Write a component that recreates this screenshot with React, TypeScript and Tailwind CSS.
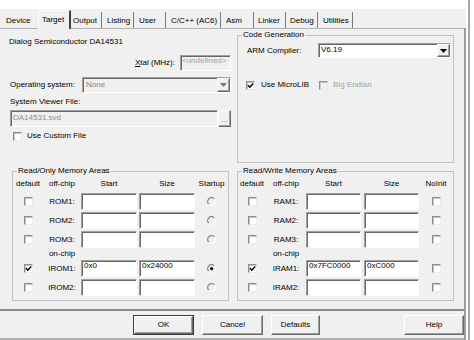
import React from 'react';

const sunken =
  'border border-t-[#a0a0a0] border-l-[#a0a0a0] border-r-white border-b-white shadow-[inset_1px_1px_0_#696969]';
const raised =
  'border border-t-white border-l-white border-r-[#696969] border-b-[#696969] shadow-[inset_-1px_-1px_0_#a0a0a0]';

function Check({ checked = false, disabled = false, cls = '' }: { checked?: boolean; disabled?: boolean; cls?: string }) {
  return (
    <div
      className={`${cls} relative w-[9px] h-[9px] shrink-0 border border-t-[#8e8e8e] border-l-[#8e8e8e] border-r-[#e8e8e8] border-b-[#e8e8e8] shadow-[inset_1px_1px_0_#c4c4c4] ${
        disabled ? 'bg-[#f0f0f0]' : 'bg-white'
      }`}
    >
      {checked && (
        <svg className="absolute left-0 top-0" width="7" height="7" viewBox="0 0 7 7">
          <path d="M1 3.2 L2.8 5.2 L6.2 1.4" stroke="#000" strokeWidth="1.5" fill="none" />
        </svg>
      )}
    </div>
  );
}

function Radio({ checked = false }: { checked?: boolean }) {
  return (
    <svg width="9" height="9" viewBox="0 0 9 9" className="shrink-0">
      <path d="M1.81 7.19 A3.8 3.8 0 0 1 7.19 1.81" stroke="#7a7a7a" strokeWidth="1.2" fill="none" />
      <path d="M7.19 1.81 A3.8 3.8 0 0 1 1.81 7.19" stroke="#ffffff" strokeWidth="1.2" fill="none" />
      {checked && <circle cx="4.6" cy="4.6" r="1.6" fill="#000" />}
    </svg>
  );
}

function DropBtn({ disabled = false }: { disabled?: boolean }) {
  return (
    <div className={`w-[13px] h-full ${raised} bg-[#f0f0f0] flex items-center justify-center shrink-0`}>
      <svg width="7" height="4" viewBox="0 0 7 4">
        <path d="M0 0H7L3.5 4Z" fill={disabled ? '#7a7a7a' : '#000'} />
      </svg>
    </div>
  );
}

type Tab = { label: string; cls: string; sel?: boolean };
const tabs: Tab[] = [
  { label: 'Device', cls: 'w-[38px] pl-[6px] h-[16px] pt-[4px]' },
  {
    label: 'Target',
    cls: 'relative z-10 -mb-px w-[33px] pl-[3px] h-[19px] pt-[4px] border-l border-t border-l-white border-t-white border-r-2 border-r-[#404040] bg-[#f0f0f0]',
    sel: true,
  },
  { label: 'Output', cls: 'w-[31px] pl-[2px] h-[16px] pt-[4px] border-r border-r-[#7a7a7a]' },
  { label: 'Listing', cls: 'w-[32px] pl-[5px] h-[16px] pt-[4px] border-r border-r-[#7a7a7a]' },
  { label: 'User', cls: 'w-[32px] pl-[5px] h-[16px] pt-[4px] border-r border-r-[#7a7a7a]' },
  { label: 'C/C++ (AC6)', cls: 'w-[55px] pl-[5px] h-[16px] pt-[4px] border-r border-r-[#7a7a7a]' },
  { label: 'Asm', cls: 'w-[33px] pl-[5px] h-[16px] pt-[4px] border-r border-r-[#7a7a7a]' },
  { label: 'Linker', cls: 'w-[32px] pl-[4px] h-[16px] pt-[4px] border-r border-r-[#7a7a7a]' },
  { label: 'Debug', cls: 'w-[32px] pl-[4px] h-[16px] pt-[4px] border-r border-r-[#7a7a7a]' },
  { label: 'Utilities', cls: 'w-[35px] pl-[5px] h-[16px] pt-[4px] border-r border-r-[#7a7a7a]' },
];

type Cols = { c1: string; c2: string; c3: string; gap: string; c4: string; c5: string };
const leftCols: Cols = { c1: 'w-[30px]', c2: 'w-[38px]', c3: 'w-[56px]', gap: 'w-[2px]', c4: 'w-[56px]', c5: 'w-[33px]' };
const rightCols: Cols = { c1: 'w-[28px]', c2: 'w-[40px]', c3: 'w-[55px]', gap: 'w-[3px]', c4: 'w-[55px]', c5: 'w-[34px]' };

function Field({ text = '' }: { text?: string }) {
  return <div className={`w-full h-full bg-white ${sunken} pl-[2px] leading-[10px] whitespace-nowrap overflow-hidden`}>{text}</div>;
}

type MemRow = { label: string; check?: boolean; start?: string; size?: string; last?: 'radio' | 'radioOn' | 'check' };

function MemGroup({
  title,
  cols,
  lastHeader,
  lastKind,
  offRows,
  onRows,
  cls,
}: {
  title: string;
  cols: Cols;
  lastHeader: string;
  lastKind: 'radio' | 'check';
  offRows: MemRow[];
  onRows: MemRow[];
  cls: string;
}) {
  const renderRow = (r: MemRow, mt: string) => (
    <div key={r.label} className={`flex h-[17px] ${mt}`}>
      <div className={`${cols.c1} flex items-center justify-center`}>
        <Check checked={r.check} />
      </div>
      <div className={`${cols.c2} flex items-center justify-center whitespace-nowrap`}>{r.label}</div>
      <div className={cols.c3}>
        <Field text={r.start} />
      </div>
      <div className={cols.gap} />
      <div className={cols.c4}>
        <Field text={r.size} />
      </div>
      <div className={`${cols.c5} flex items-center justify-center`}>
        {lastKind === 'radio' ? <Radio checked={r.last === 'radioOn'} /> : <Check />}
      </div>
    </div>
  );
  return (
    <fieldset className={`${cls} w-[217px] h-[135px] border border-[#c2c2c2] shrink-0`}>
      <legend className="ml-[4px] px-[1px] leading-[10px] whitespace-nowrap">{title}</legend>
      <div className="mt-[3px] flex h-[10px] leading-[10px] whitespace-nowrap">
        <div className={`${cols.c1} text-center`}>default</div>
        <div className={`${cols.c2} text-center`}>off-chip</div>
        <div className={`${cols.c3} text-center`}>Start</div>
        <div className={cols.gap} />
        <div className={`${cols.c4} text-center`}>Size</div>
        <div className={`${cols.c5} text-center`}>{lastHeader}</div>
      </div>
      {offRows.map((r, i) => renderRow(r, i === 0 ? 'mt-[4px]' : 'mt-[2px]'))}
      <div className="flex h-[11px] items-center">
        <div className={cols.c1} />
        <div className={`${cols.c2} text-center leading-[10px] whitespace-nowrap`}>on-chip</div>
      </div>
      {onRows.map((r, i) => renderRow(r, i === 0 ? 'mt-[1px]' : 'mt-[2px]'))}
    </fieldset>
  );
}

function Btn({ label, cls, def = false }: { label: string; cls: string; def?: boolean }) {
  return (
    <div className={`${cls} h-[20px] shrink-0 ${def ? 'border border-[#3c3c3c]' : ''}`}>
      <div className={`w-full h-full ${raised} flex items-center justify-center`}>{label}</div>
    </div>
  );
}

export default function App() {
  return (
    <div className="w-[474px] h-[340px] overflow-hidden flex bg-white text-black text-[8px] leading-[10px] font-['Liberation_Sans',Arial,sans-serif]">
      <div className="w-[466px] h-full flex flex-col">
        <div className="h-[9px] bg-white" />
        <div className="h-[19px] bg-[#f0f0f0] flex items-end">
          {tabs.map((t) => (
            <div key={t.label} className={`${t.cls} whitespace-nowrap leading-[10px]`}>
              {t.label}
            </div>
          ))}
        </div>
        <div className="flex-1 flex flex-col border-r-2 border-r-[#9c9c9c] bg-[#f0f0f0]">
          {/* panel */}
          <div className="h-[283px] border-t border-t-[#b4b4b4] border-b-2 border-b-[#8a8a8a] flex flex-col">
            <div className="flex">
              <div className="w-[237px] pl-[10px] pr-[6px] shrink-0">
                <div className="mt-[8px] -ml-px leading-[10px]">Dialog Semiconductor DA14531</div>
                <div className="mt-[8px] h-[16px] flex items-center justify-end">
                  <span>
                    <span className="underline">X</span>tal (MHz):
                  </span>
                  <div className={`ml-[5px] w-[51px] h-full ${sunken} bg-[#f0f0f0] text-[#a0a0a0] pl-[1px] leading-[10px] whitespace-nowrap overflow-hidden`}>
                    &lt;undefined&gt;
                  </div>
                </div>
                <div className="mt-[6px] h-[16px] flex items-center">
                  <div className="w-[72px] whitespace-nowrap">Operating system:</div>
                  <div className={`w-[149px] h-full ${sunken} bg-[#f0f0f0] flex`}>
                    <div className="flex-1 pl-[3px] pt-[2px] leading-[10px] text-[#808080]">None</div>
                    <DropBtn disabled />
                  </div>
                </div>
                <div className="mt-[4px] leading-[10px]">System Viewer File:</div>
                <div className="mt-[3px] h-[17px] flex">
                  <div className={`w-[208px] h-full ${sunken} bg-[#f0f0f0] text-[#8c8c8c] pl-[2px] pt-[2px] leading-[10px]`}>DA14531.svd</div>
                  <div className={`w-[13px] h-full ${raised} bg-[#f0f0f0] text-[#808080] flex items-end justify-center pb-[3px] leading-[6px]`}>...</div>
                </div>
                <div className="mt-[4px] h-[10px] flex items-center">
                  <Check cls="ml-[3px]" />
                  <span className="ml-[5px] whitespace-nowrap">Use Custom File</span>
                </div>
              </div>
              <fieldset className="mt-px w-[217px] h-[133px] border border-[#c2c2c2] shrink-0">
                <legend className="ml-[4px] px-[1px] leading-[10px] whitespace-nowrap">Code Generation</legend>
                <div className="mt-[3px] h-[15px] flex items-center">
                  <div className="ml-[9px] w-[71px] whitespace-nowrap">ARM Compiler:</div>
                  <div className={`w-[133px] h-full ${sunken} bg-white flex`}>
                    <div className="flex-1 pl-[2px] pt-[1px] leading-[10px]">V6.19</div>
                    <DropBtn />
                  </div>
                </div>
                <div className="mt-[22px] h-[10px] flex items-center">
                  <Check checked cls="ml-[8px]" />
                  <span className="ml-[6px] whitespace-nowrap">Use MicroLIB</span>
                  <Check disabled cls="ml-[10px]" />
                  <span className="ml-[5px] whitespace-nowrap text-[#a0a0a0]">Big Endian</span>
                </div>
              </fieldset>
            </div>
            <div className="mt-[3px] flex">
              <MemGroup
                cls="ml-[12px]"
                title="Read/Only Memory Areas"
                cols={leftCols}
                lastHeader="Startup"
                lastKind="radio"
                offRows={[{ label: 'ROM1:' }, { label: 'ROM2:' }, { label: 'ROM3:' }]}
                onRows={[
                  { label: 'IROM1:', check: true, start: '0x0', size: '0x24000', last: 'radioOn' },
                  { label: 'IROM2:' },
                ]}
              />
              <MemGroup
                cls="ml-[8px]"
                title="Read/Write Memory Areas"
                cols={rightCols}
                lastHeader="NoInit"
                lastKind="check"
                offRows={[{ label: 'RAM1:' }, { label: 'RAM2:' }, { label: 'RAM3:' }]}
                onRows={[
                  { label: 'IRAM1:', check: true, start: '0x7FC0000', size: '0xC000' },
                  { label: 'IRAM2:' },
                ]}
              />
            </div>
          </div>
          {/* button bar */}
          <div className="flex-1 flex pt-[4px] border-b-2 border-b-[#b0b0b0]">
            <Btn label="OK" cls="ml-[133px] w-[61px]" def />
            <Btn label="Cancel" cls="ml-[8px] w-[61px]" />
            <Btn label="Defaults" cls="ml-[8px] w-[49px]" />
            <Btn label="Help" cls="ml-[84px] w-[60px]" />
          </div>
        </div>
      </div>
      <div className="w-[8px] h-full bg-white">
        <div className="ml-[2px] w-[2px] h-full bg-[#a8a8a8]" />
      </div>
    </div>
  );
}
